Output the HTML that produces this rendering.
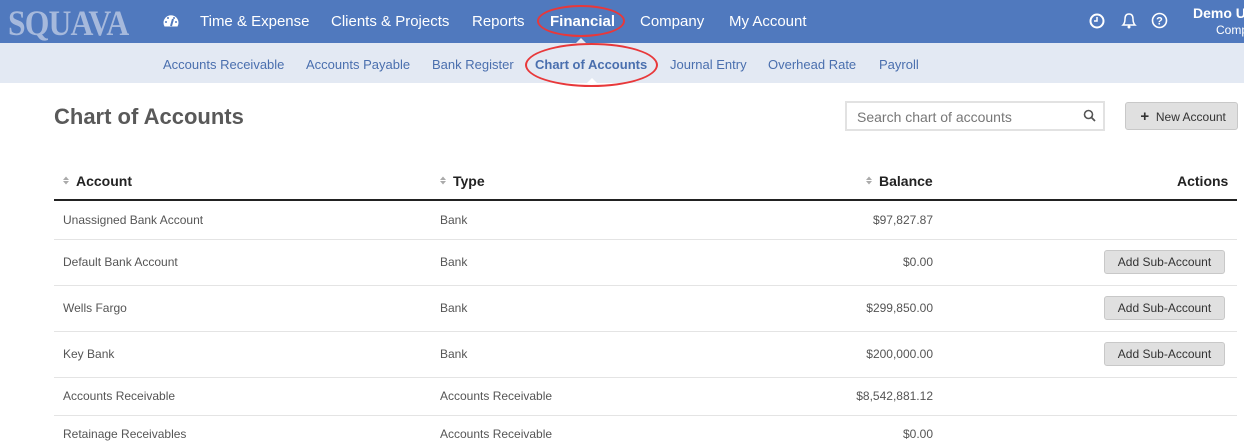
<!DOCTYPE html>
<html><head><style>
*{box-sizing:border-box;margin:0;padding:0}
body{width:1244px;height:436px;overflow:hidden;background:#fff;font-family:"Liberation Sans",sans-serif;position:relative}
.top{position:absolute;left:0;top:0;width:1244px;height:43px;background:#5079be}
.logo{position:absolute;left:8px;top:2px;font-family:"Liberation Serif",serif;font-weight:bold;font-size:36px;color:#a6b9dc;letter-spacing:-1px;transform:scaleX(0.88);transform-origin:left}
.nav{position:absolute;top:13px;color:#fff;font-size:15px;white-space:nowrap}
.sub{position:absolute;left:0;top:43px;width:1244px;height:40px;background:#e3e9f3}
.sl{position:absolute;top:57px;color:#4a6fae;font-size:13px;white-space:nowrap}
.ell{position:absolute;border:2px solid #e8383a;border-radius:50%}
h1{position:absolute;left:54px;top:104px;font-size:22px;color:#595959;font-weight:bold}
.search{position:absolute;left:845px;top:101px;width:260px;height:30px;border:2px solid #e2e2e2;font-size:14px;color:#777;padding:6px 10px}
.btn{position:absolute;background:#e0e0e0;border:1px solid #c8c8c8;border-radius:3px;font-size:12px;color:#333;text-align:center;white-space:nowrap}
.th{position:absolute;top:173px;font-size:14px;color:#222;font-weight:bold;white-space:nowrap}
.hr{position:absolute;left:54px;width:1183px;height:1px;background:#e4e4e4}
.td{position:absolute;font-size:12px;color:#555;white-space:nowrap}
.r{text-align:right}
.arr{display:inline-block;margin-right:6px;vertical-align:1px}
</style></head><body>
<div class="top"></div>
<div class="logo">SQUAVA</div>
<svg style="position:absolute;left:162px;top:13px" width="18" height="16" viewBox="0 0 18 16"><path d="M2.5 13.5 A7.5 7.5 0 1 1 15.5 13.5 Z" fill="#fff"/><path d="M9 13 L11 6" stroke="#5079be" stroke-width="2"/><circle cx="4" cy="9" r="1" fill="#5079be"/><circle cx="6" cy="5" r="1" fill="#5079be"/><circle cx="12" cy="5" r="1" fill="#5079be"/><circle cx="14" cy="9" r="1" fill="#5079be"/></svg>
<div class="nav" style="left:200px">Time &amp; Expense</div>
<div class="nav" style="left:331px">Clients &amp; Projects</div>
<div class="nav" style="left:472px">Reports</div>
<div class="nav" style="left:550px;font-weight:bold">Financial</div>
<div class="nav" style="left:640px">Company</div>
<div class="nav" style="left:729px">My Account</div>
<div class="ell" style="left:537px;top:5px;width:88px;height:32px"></div>
<div style="position:absolute;left:576px;top:38px;width:0;height:0;border:5px solid transparent;border-bottom-color:#e3e9f3;border-top:0"></div>
<svg style="position:absolute;left:1089px;top:13px" width="16" height="16" viewBox="0 0 16 16"><circle cx="8" cy="8" r="6.5" fill="none" stroke="#fff" stroke-width="2"/><path d="M8 4 V8 H5" fill="none" stroke="#fff" stroke-width="1.5"/></svg>
<svg style="position:absolute;left:1120px;top:11px" width="18" height="19" viewBox="0 0 18 19"><path d="M3 14 Q5 12 5 8 Q5 3 9 3 Q13 3 13 8 Q13 12 15 14 Z" fill="none" stroke="#fff" stroke-width="1.5"/><circle cx="9" cy="16" r="1.5" fill="#fff"/></svg>
<svg style="position:absolute;left:1151px;top:12px" width="17" height="17" viewBox="0 0 17 17"><circle cx="8.5" cy="8.5" r="7" fill="none" stroke="#fff" stroke-width="1.6"/><text x="8.5" y="12.5" font-size="11" font-weight="bold" fill="#fff" text-anchor="middle" font-family="Liberation Sans">?</text></svg>
<div style="position:absolute;left:1193px;top:5px;color:#fff;font-weight:bold;font-size:14px;white-space:nowrap">Demo U</div>
<div style="position:absolute;left:1216px;top:23px;color:#fff;font-size:12px;white-space:nowrap">Comp</div>
<div class="sub"></div>
<div class="sl" style="left:163px">Accounts Receivable</div>
<div class="sl" style="left:306px">Accounts Payable</div>
<div class="sl" style="left:432px">Bank Register</div>
<div class="sl" style="left:535px;font-weight:bold">Chart of Accounts</div>
<div class="sl" style="left:670px">Journal Entry</div>
<div class="sl" style="left:768px">Overhead Rate</div>
<div class="sl" style="left:879px">Payroll</div>
<div class="ell" style="left:525px;top:43px;width:133px;height:44px"></div>
<div style="position:absolute;left:586px;top:78px;width:0;height:0;border:6px solid transparent;border-bottom-color:#fff;border-top:0"></div>
<h1>Chart of Accounts</h1>
<div class="search">Search chart of accounts</div>
<svg style="position:absolute;left:1083px;top:109px" width="13" height="13" viewBox="0 0 13 13"><circle cx="5.5" cy="5.5" r="4" fill="none" stroke="#555" stroke-width="1.6"/><path d="M8.5 8.5 L12 12" stroke="#555" stroke-width="1.8"/></svg>
<div class="btn" style="left:1125px;top:102px;width:113px;height:28px;line-height:27px">&nbsp;<b style="font-size:15px">+</b>&nbsp; New Account</div>
<div class="th" style="left:62px"><svg class="arr" width="8" height="9" viewBox="0 0 8 9"><path d="M1 4 L4 0.5 L7 4 Z M1 5 L4 8.5 L7 5 Z" fill="#aaa"/></svg>Account</div>
<div class="th" style="left:439px"><svg class="arr" width="8" height="9" viewBox="0 0 8 9"><path d="M1 4 L4 0.5 L7 4 Z M1 5 L4 8.5 L7 5 Z" fill="#aaa"/></svg>Type</div>
<div class="th" style="left:865px"><svg class="arr" width="8" height="9" viewBox="0 0 8 9"><path d="M1 4 L4 0.5 L7 4 Z M1 5 L4 8.5 L7 5 Z" fill="#aaa"/></svg>Balance</div>
<div class="th" style="left:1177px">Actions</div>
<div style="position:absolute;left:54px;top:199px;width:1183px;height:2px;background:#222"></div>
<div class="hr" style="top:239px"></div>
<div class="hr" style="top:285px"></div>
<div class="hr" style="top:331px"></div>
<div class="hr" style="top:377px"></div>
<div class="hr" style="top:415px"></div>
<div class="td" style="left:63px;top:213px">Unassigned Bank Account</div><div class="td" style="left:440px;top:213px">Bank</div><div class="td r" style="left:733px;width:200px;top:213px">$97,827.87</div>
<div class="td" style="left:63px;top:255px">Default Bank Account</div><div class="td" style="left:440px;top:255px">Bank</div><div class="td r" style="left:733px;width:200px;top:255px">$0.00</div>
<div class="td" style="left:63px;top:301px">Wells Fargo</div><div class="td" style="left:440px;top:301px">Bank</div><div class="td r" style="left:733px;width:200px;top:301px">$299,850.00</div>
<div class="td" style="left:63px;top:347px">Key Bank</div><div class="td" style="left:440px;top:347px">Bank</div><div class="td r" style="left:733px;width:200px;top:347px">$200,000.00</div>
<div class="td" style="left:63px;top:389px">Accounts Receivable</div><div class="td" style="left:440px;top:389px">Accounts Receivable</div><div class="td r" style="left:733px;width:200px;top:389px">$8,542,881.12</div>
<div class="td" style="left:63px;top:427px">Retainage Receivables</div><div class="td" style="left:440px;top:427px">Accounts Receivable</div><div class="td r" style="left:733px;width:200px;top:427px">$0.00</div>
<div class="btn" style="left:1104px;top:250px;width:121px;height:24px;line-height:23px">Add Sub-Account</div>
<div class="btn" style="left:1104px;top:296px;width:121px;height:24px;line-height:23px">Add Sub-Account</div>
<div class="btn" style="left:1104px;top:342px;width:121px;height:24px;line-height:23px">Add Sub-Account</div>
</body></html>
